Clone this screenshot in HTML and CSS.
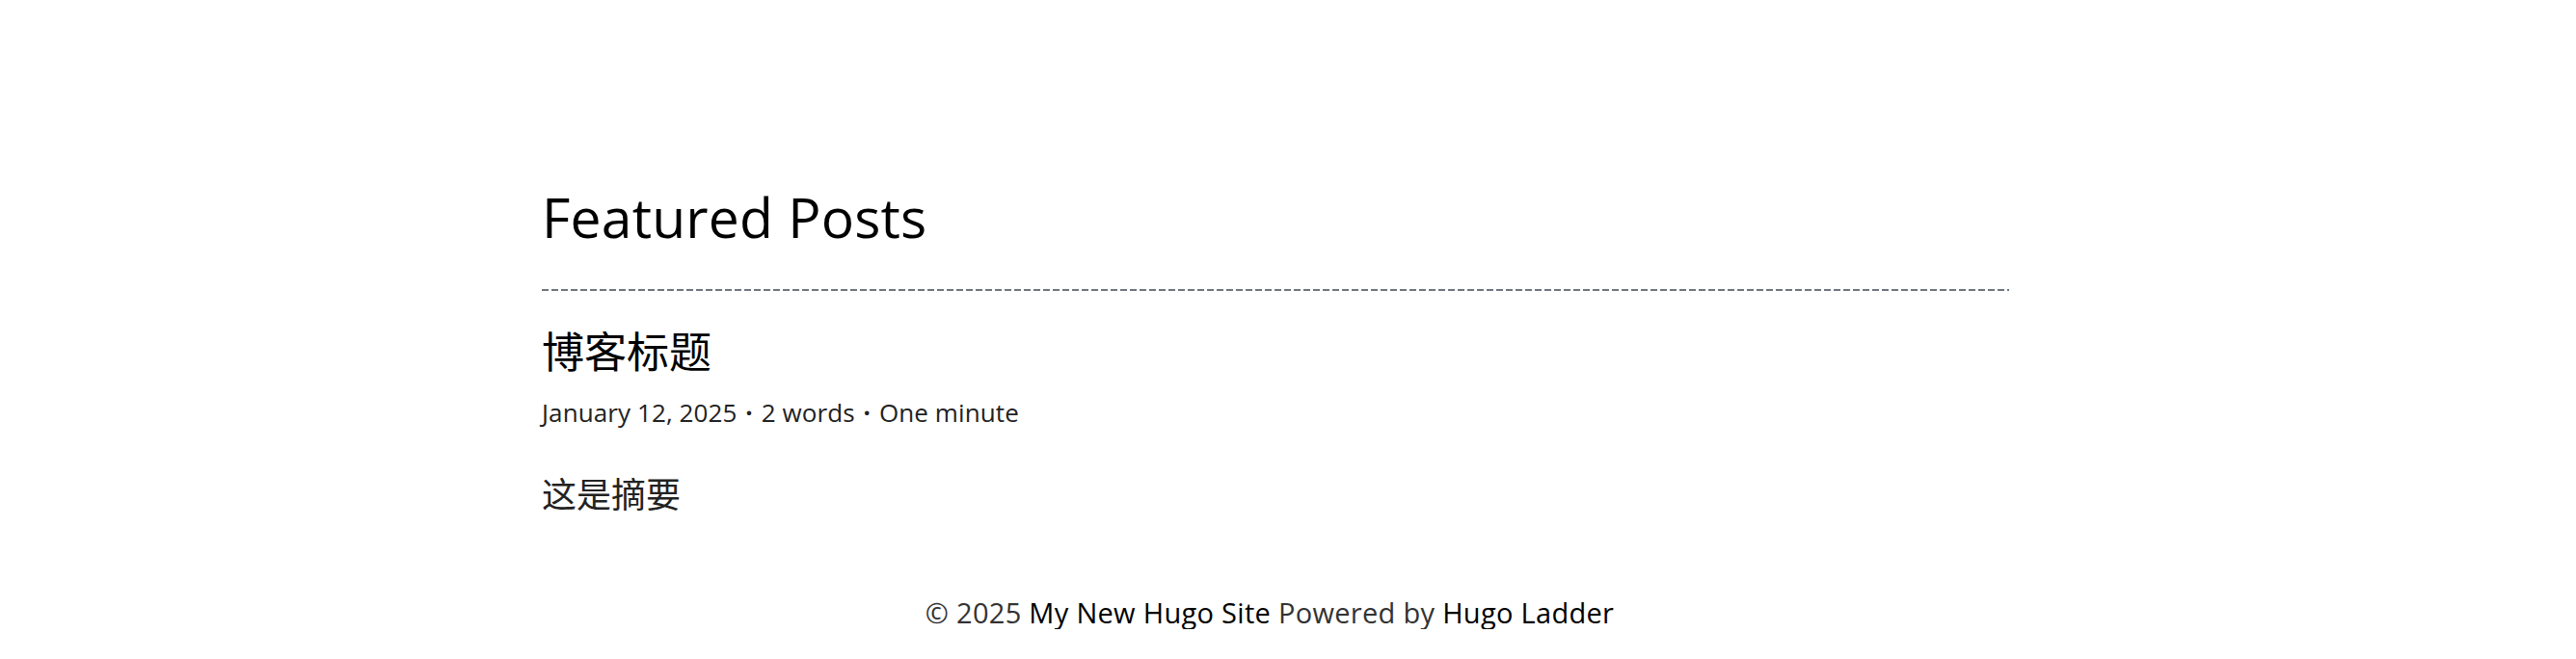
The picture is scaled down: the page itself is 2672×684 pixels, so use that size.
FILE: index.html
```html
<!DOCTYPE html>
<html lang="zh-CN">
<head>
<meta charset="utf-8">
<title>My New Hugo Site</title>
<link rel="stylesheet" href="styles.css">
</head>
<body>
<div class="page">
  <main class="container">
    <h2 class="section-title">Featured Posts</h2>
    <div class="divider"></div>
    <article class="post">
      <h3 class="post-title">博客标题</h3>
      <div class="post-meta">January 12, 2025 <span class="dot">·</span> 2 words <span class="dot">·</span> One minute</div>
      <p class="post-summary">这是摘要</p>
    </article>
    <footer class="footer">© 2025 <a class="link" href="#">My New Hugo Site</a> Powered by <a class="link" href="#">Hugo Ladder</a></footer>
  </main>
</div>
</body>
</html>
```
FILE: styles.css
```css
html, body {
  margin: 0;
  padding: 0;
  background: #ffffff;
}
body {
  font-family: "Open Sans", "Noto Sans CJK SC", sans-serif;
  color: #111;
}
.page {
  display: flex;
  justify-content: flex-start;
}
.container {
  width: 1522px;
  margin-left: 562px;
  padding-top: 191px;
  display: flex;
  flex-direction: column;
}
.section-title {
  margin: 0;
  font-size: 57px;
  line-height: 68px;
  letter-spacing: 0.2px;
  font-weight: 400;
  color: #000;
}
.divider {
  margin-top: 41px;
  height: 2px;
  background: repeating-linear-gradient(to right, #6f757e 0 7px, transparent 7px 10px);
}
.post {
  display: flex;
  flex-direction: column;
}
.post-title {
  margin: 37px 0 0;
  font-size: 44px;
  line-height: 53px;
  font-weight: 400;
  color: #000;
}
.post-meta {
  margin-top: 21px;
  font-size: 26px;
  line-height: 30px;
  letter-spacing: 0.1px;
  color: #222;
}
.dot {
  font-weight: 700;
  padding: 0 2px;
}
.post-summary {
  margin: 50px 0 0;
  font-size: 36px;
  line-height: 42px;
  color: #222;
}
.footer {
  margin-top: 84px;
  padding-right: 12px;
  font-size: 29px;
  line-height: 34px;
  letter-spacing: 0.3px;
  text-align: center;
  color: #333;
}
.link {
  color: #000;
  text-decoration: none;
}
```
